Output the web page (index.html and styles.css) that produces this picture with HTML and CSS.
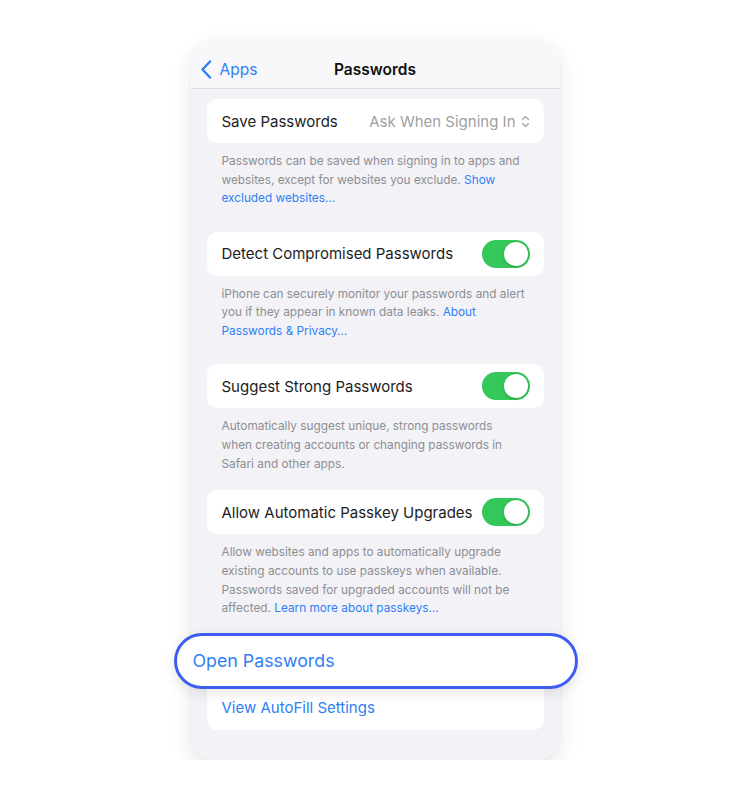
FILE: index.html
```html
<!DOCTYPE html>
<html lang="en">
<head>
<meta charset="utf-8">
<title>Passwords</title>
<link rel="stylesheet" href="styles.css">
</head>
<body>
<div class="phone">
  <header class="nav">
    <div class="back">
      <svg class="back-chev" width="12" height="19" viewBox="0 0 12 19"><path d="M10 1.5 L2.5 9.5 L10 17.5" fill="none" stroke="#2f80f6" stroke-width="2.4" stroke-linecap="round" stroke-linejoin="round"/></svg>
      <span>Apps</span>
    </div>
    <div class="nav-title">Passwords</div>
    <div></div>
  </header>
  <main class="content">
    <section class="group">
      <div class="row">
        <span class="label">Save Passwords</span>
        <span class="value">Ask When Signing In
          <svg class="updown" width="9" height="13" viewBox="0 0 9 13"><path d="M1.5 4.5 L4.5 1.5 L7.5 4.5 M1.5 8.5 L4.5 11.5 L7.5 8.5" fill="none" stroke="#a3a3a8" stroke-width="1.3" stroke-linecap="round" stroke-linejoin="round"/></svg>
        </span>
      </div>
    </section>
    <p class="footer">Passwords can be saved when signing in to apps and websites, except for websites you exclude. <a class="link">Show excluded websites…</a></p>

    <section class="group">
      <div class="row">
        <span class="label">Detect Compromised Passwords</span>
        <span class="toggle"><span class="knob"></span></span>
      </div>
    </section>
    <p class="footer">iPhone can securely monitor your passwords and alert you if they appear in known data leaks. <a class="link">About Passwords &amp; Privacy…</a></p>

    <section class="group">
      <div class="row">
        <span class="label">Suggest Strong Passwords</span>
        <span class="toggle"><span class="knob"></span></span>
      </div>
    </section>
    <p class="footer footer-tight">Automatically suggest unique, strong passwords<br>when creating accounts or changing passwords in Safari and other apps.</p>

    <section class="group">
      <div class="row">
        <span class="label">Allow Automatic Passkey Upgrades</span>
        <span class="toggle"><span class="knob"></span></span>
      </div>
    </section>
    <p class="footer">Allow websites and apps to automatically upgrade existing accounts to use passkeys when available. Passwords saved for upgraded accounts will not be affected. <a class="link">Learn more about passkeys…</a></p>

    <section class="group">
      <div class="row row-highlight">
        <div class="callout">Open Passwords</div>
      </div>
      <div class="row">
        <span class="action">View AutoFill Settings</span>
      </div>
    </section>
  </main>
</div>
</body>
</html>
```
FILE: styles.css
```css
* { box-sizing: border-box; }
html, body { margin: 0; padding: 0; background: #ffffff; }
body {
  font-family: Inter, "Noto Sans", "Liberation Sans", sans-serif;
  color: #1c1c1e;
  padding-top: 40px;
}
.phone {
  width: 369px;
  height: 720px;
  margin: 0 auto;
  background: #f2f2f7;
  border-radius: 22px;
  box-shadow: 0 8px 22px rgba(0, 0, 0, 0.09), 0 1px 4px rgba(0, 0, 0, 0.04);
}
.nav {
  height: 49px;
  display: grid;
  grid-template-columns: 1fr auto 1fr;
  align-items: center;
  background: #f8f8fa;
  border-bottom: 1px solid #dcdce0;
  border-radius: 22px 22px 0 0;
  padding: 10px 9px 0;
}
.back {
  display: flex;
  align-items: center;
  gap: 8px;
  color: #2f80f6;
  font-size: 15.5px;
}
.back-chev { display: block; }
.nav-title {
  font-size: 15.5px;
  font-weight: 600;
  color: #111;
}
.content { padding: 10px 16px 0; }
.group {
  background: #ffffff;
  border-radius: 10px;
}
.row {
  height: 44px;
  display: flex;
  align-items: center;
  justify-content: space-between;
  padding: 0 14px 0 15px;
}
.label { font-size: 15px; color: #1c1c1e; }
.value {
  display: flex;
  align-items: center;
  gap: 5px;
  font-size: 15px;
  color: #a0a0a5;
}
.updown { display: block; }
.toggle {
  width: 48px;
  height: 28px;
  border-radius: 14px;
  background: #34c759;
  display: flex;
  align-items: center;
  justify-content: flex-end;
  padding: 2px;
}
.knob {
  width: 24px;
  height: 24px;
  border-radius: 50%;
  background: #fff;
  box-shadow: 0 1px 3px rgba(0, 0, 0, 0.18);
}
.footer {
  margin: 0 0 23.5px;
  padding: 9px 15px 0;
  font-size: 11.8px;
  line-height: 18.7px;
  color: #8e8e93;
}
.footer-tight { margin-bottom: 17px; padding-right: 24px; }
.link { color: #2f80f6; }
.row-highlight { position: relative; }
.callout {
  position: absolute;
  top: -9px;
  bottom: -3px;
  left: -33px;
  right: -34px;
  display: flex;
  align-items: center;
  padding-left: 16px;
  background: #ffffff;
  border: 3px solid #3d5cf2;
  border-radius: 28px;
  box-shadow: 0 4px 14px rgba(0, 0, 0, 0.10);
  color: #2f80f6;
  font-size: 17.8px;
}
.action { color: #2f80f6; font-size: 15px; }
```
